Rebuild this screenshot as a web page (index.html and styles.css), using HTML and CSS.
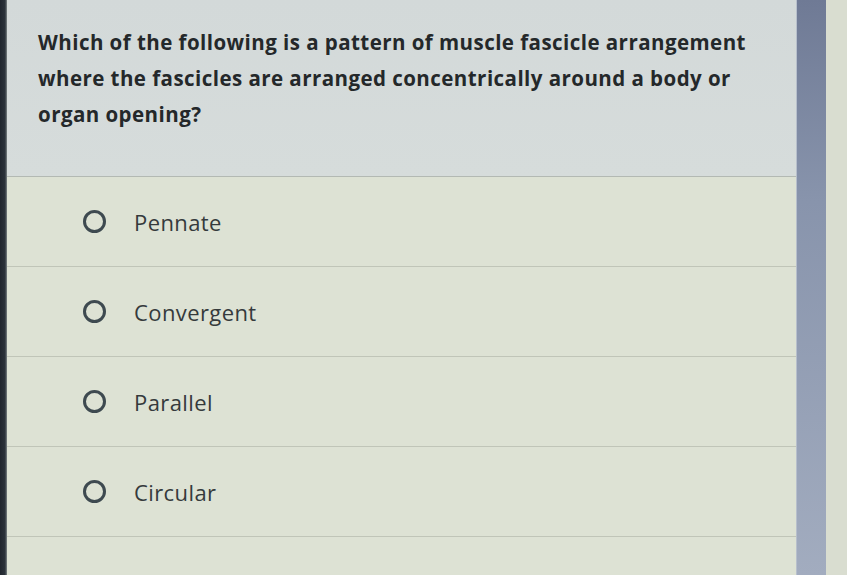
FILE: index.html
```html
<!DOCTYPE html>
<html>
<head>
<meta charset="utf-8">
<link rel="stylesheet" href="styles.css">
</head>
<body>
<div class="screen">
  <div class="edge"></div>
  <div class="panel">
    <div class="question">
      <p>Which of the following is a pattern of muscle fascicle arrangement<br>where the fascicles are arranged concentrically around a body or<br>organ opening?</p>
    </div>
    <ul class="options">
      <li class="option"><span class="radio"></span><span class="label">Pennate</span></li>
      <li class="option"><span class="radio"></span><span class="label">Convergent</span></li>
      <li class="option"><span class="radio"></span><span class="label">Parallel</span></li>
      <li class="option"><span class="radio"></span><span class="label">Circular</span></li>
    </ul>
  </div>
  <div class="scrollbar"></div>
  <div class="margin"></div>
</div>
</body>
</html>
```
FILE: styles.css
```css
html, body {
  margin: 0;
  padding: 0;
  height: 100%;
  overflow: hidden;
}
.screen {
  display: flex;
  width: 847px;
  height: 575px;
  background: #dadfd0;
  font-family: "Open Sans", Lato, sans-serif;
}
.edge {
  width: 7px;
  background: linear-gradient(90deg, #20262e 0, #2c333b 5px, #7b8384 7px);
}
.panel {
  width: 789px;
  display: flex;
  flex-direction: column;
  background: #dde2d4;
}
.question {
  background: linear-gradient(180deg, #d3d9d9 0, #d6dcdb 100%);
  padding: 24px 0 44px 31px;
  border-bottom: 1px solid #b3b9b3;
}
.question p {
  margin: 0;
  font-size: 20.5px;
  font-weight: 700;
  line-height: 36px;
  letter-spacing: 0.45px;
  color: #24282a;
  white-space: nowrap;
}
.options {
  list-style: none;
  margin: 0;
  padding: 0;
}
.option {
  height: 89px;
  display: flex;
  align-items: center;
  padding-left: 76px;
  border-bottom: 1px solid #c0c5b8;
}
.radio {
  width: 17px;
  height: 17px;
  border: 3px solid #3e4a50;
  border-radius: 50%;
  box-sizing: content-box;
  flex: none;
}
.label {
  margin-left: 28px;
  font-size: 22px;
  letter-spacing: 0.4px;
  color: #353a3c;
}
.scrollbar {
  width: 29px;
  background: linear-gradient(180deg, #6f7a95 0, #8894ac 35%, #a2acbf 100%);
  border-left: 1px solid #b7bfcc;
}
.margin {
  flex: 1;
  background: #d9ddd0;
}
```
